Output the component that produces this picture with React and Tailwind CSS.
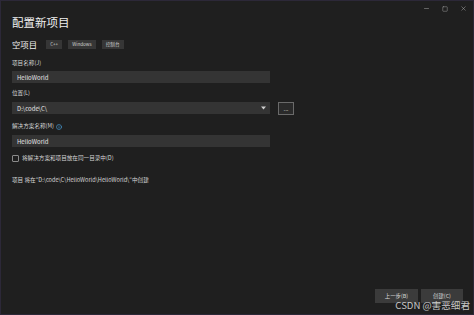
import { Minus, Square, X, Info } from "lucide-react";

const TAGS = ["C++", "Windows", "控制台"];

const Field = ({ value, dropdown }) => (
  <div className="w-[258px] h-[12px] bg-[#343434] flex items-center pl-[5px] pr-[3px] text-[6px] text-[#e6e6e6]">
    <span className="flex-1">{value}</span>
    {dropdown && (
      <svg width="5" height="4" viewBox="0 0 5 4" className="mr-[1px]">
        <path d="M0 0.5 L5 0.5 L2.5 3.5 Z" fill="#d0d0d0" />
      </svg>
    )}
  </div>
);

const Label = ({ children }) => (
  <p className="text-[5.6px] leading-[7px] text-[#d6d6d6]">{children}</p>
);

export default function App() {
  return (
    <div className="w-[474px] h-[315px] bg-[#1f1f1f] border border-[#2c2838] flex flex-col relative overflow-hidden font-['Noto_Sans_CJK_SC',sans-serif] text-[#e6e6e6]">
      {/* Title bar controls */}
      <div className="h-[14px] flex items-center justify-end gap-[12px] pr-[6px] pt-[1px] text-[#bdbdbd]">
        <Minus size={7} strokeWidth={1.5} />
        <Square size={6} strokeWidth={1.6} />
        <X size={7} strokeWidth={1.5} />
      </div>

      <div className="flex-1 flex flex-col px-[11px]">
        <h1 className="text-[11.5px] leading-[13px] mt-[1px] text-[#f0f0f0]">配置新项目</h1>

        {/* Template + tags */}
        <div className="flex items-center gap-[6px] mt-[10px] h-[10px]">
          <span className="text-[8.4px] leading-[10px] mr-[3px] text-[#f0f0f0]">空项目</span>
          {TAGS.map((t) => (
            <span
              key={t}
              className="h-[9px] px-[4px] bg-[#363636] text-[4.6px] leading-[9px] text-[#cfcfcf]"
            >
              {t}
            </span>
          ))}
        </div>

        <div className="mt-[11px]">
          <Label>项目名称(J)</Label>
        </div>
        <div className="mt-[4px]">
          <Field value="HelloWorld" />
        </div>

        <div className="mt-[7px]">
          <Label>位置(L)</Label>
        </div>
        <div className="mt-[4px] flex items-center gap-[8px]">
          <Field value="D:\code\C\" dropdown />
          <button className="w-[16px] h-[13px] mt-[1px] border border-[#6a6a6a] bg-[#2a2a2a] flex items-end justify-center pb-[2px] text-[6px] leading-[6px] text-[#dcdcdc]">
            ...
          </button>
        </div>

        <div className="mt-[8px] flex items-center gap-[2px]">
          <Label>解决方案名称(M)</Label>
          <Info size={6} strokeWidth={2.4} className="text-[#4aa3df]" />
        </div>
        <div className="mt-[5px]">
          <Field value="HelloWorld" />
        </div>

        <div className="mt-[7px] flex items-center gap-[3px] h-[8px]">
          <span className="w-[7px] h-[7px] border border-[#8a8a8a] rounded-[1px]" />
          <span className="text-[5.6px] leading-[7px] text-[#d6d6d6]">将解决方案和项目放在同一目录中(D)</span>
        </div>

        <p className="mt-[15px] text-[5.6px] leading-[7px] text-[#d6d6d6]">
          项目 将在"D:\code\C\HelloWorld\HelloWorld\"中创建
        </p>

        <div className="flex-1" />

        {/* Footer buttons */}
        <div className="flex justify-end gap-[3px] mb-[11px] -mr-[1px]">
          <button className="w-[43px] h-[14px] bg-[#3b3b3b] text-[5.4px] text-[#d8d8d8] flex items-center justify-center">
            上一步(B)
          </button>
          <button className="w-[42px] h-[14px] bg-[#3b3b3b] text-[5.4px] text-[#d8d8d8] flex items-center justify-center">
            创建(C)
          </button>
        </div>
      </div>

      {/* Watermark */}
      <span className="absolute right-[3px] bottom-[3px] text-[9.6px] leading-[11px] text-white/75 whitespace-nowrap">
        CSDN @害恶细君
      </span>
    </div>
  );
}
